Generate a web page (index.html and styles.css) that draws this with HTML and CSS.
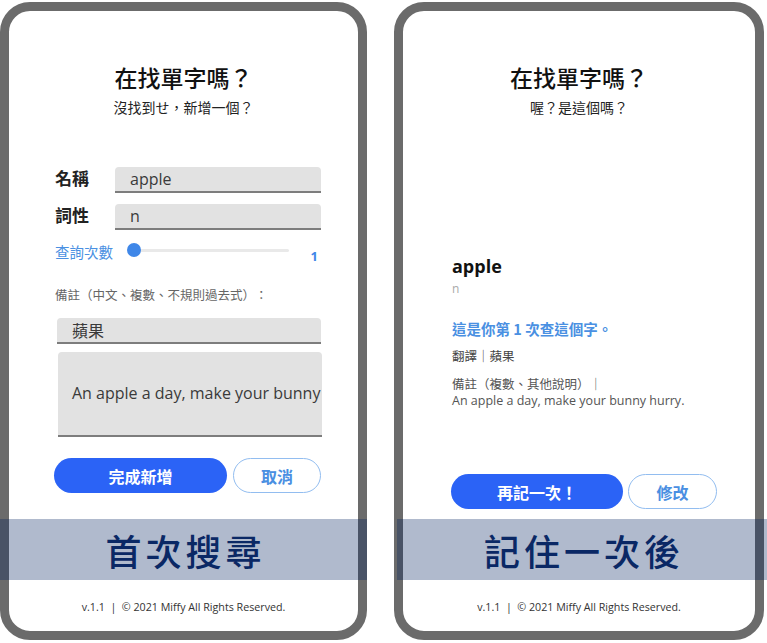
FILE: index.html
```html
<!DOCTYPE html>
<html lang="zh-Hant">
<head>
<meta charset="utf-8">
<title>單字本</title>
<link rel="stylesheet" href="styles.css">
</head>
<body>
<div class="page">
  <section class="phone phone-left">
    <header class="head">
      <h1 class="title">在找單字嗎？</h1>
      <p class="subtitle">沒找到せ，新增一個？</p>
    </header>
    <div class="form">
      <div class="row">
        <span class="label">名稱</span>
        <div class="field grow">apple</div>
      </div>
      <div class="row row-2">
        <span class="label">詞性</span>
        <div class="field grow">n</div>
      </div>
      <div class="slider-row">
        <span class="slider-label">查詢次數</span>
        <div class="track"><span class="thumb"></span></div>
        <span class="slider-value">1</span>
      </div>
      <p class="note-label">備註（中文、複數、不規則過去式）：</p>
      <div class="field field-full">蘋果</div>
      <div class="field area"><span class="area-text">An apple a day, make your bunny hurry.</span></div>
    </div>
    <div class="actions actions-left">
      <button class="btn btn-primary btn-wide">完成新增</button>
      <button class="btn btn-outline">取消</button>
    </div>
    <div class="banner banner-left">首次搜尋</div>
    <footer class="footer">v.1.1 &nbsp;|&nbsp; © 2021 Miffy All Rights Reserved.</footer>
  </section>

  <section class="phone phone-right">
    <header class="head">
      <h1 class="title">在找單字嗎？</h1>
      <p class="subtitle">喔？是這個嗎？</p>
    </header>
    <div class="word">
      <h2 class="word-name">apple</h2>
      <p class="word-pos">n</p>
      <p class="word-count">這是你第 1 次查這個字。</p>
      <p class="word-line">翻譯｜蘋果</p>
      <p class="word-line word-note">備註（複數、其他說明）｜</p>
      <p class="word-example">An apple a day, make your bunny hurry.</p>
    </div>
    <div class="actions actions-right">
      <button class="btn btn-primary btn-wide">再記一次！</button>
      <button class="btn btn-outline">修改</button>
    </div>
    <div class="banner banner-right">記住一次後</div>
    <footer class="footer">v.1.1 &nbsp;|&nbsp; © 2021 Miffy All Rights Reserved.</footer>
  </section>
</div>
</body>
</html>
```

FILE: styles.css
```css
* { box-sizing: border-box; }

html, body {
  margin: 0;
  padding: 0;
  background: #ffffff;
}

body {
  font-family: "Open Sans", "Noto Sans CJK TC", sans-serif;
  color: #222;
  width: 767px;
  height: 643px;
  overflow: hidden;
  text-spacing-trim: space-all;
  font-feature-settings: "chws" 0, "halt" 0, "palt" 0;
}

.page {
  display: flex;
  gap: 27px;
  padding-top: 2px;
}

.phone {
  position: relative;
  height: 638px;
  border: 9px solid #6b6b6b;
  border-radius: 30px;
  background: #fff;
  display: flex;
  flex-direction: column;
  padding: 52px 37px 16px 46px;
}

.phone-left { width: 367px; }
.phone-right { width: 370px; padding-left: 49px; }

.head {
  text-align: center;
  margin-left: -9px;
}
.phone-right .head { margin-left: -12px; }

.title {
  margin: 0;
  font-size: 23px;
  line-height: 28px;
  font-weight: 500;
  color: #111;
  font-family: "Noto Sans CJK TC", sans-serif;
}

.subtitle {
  margin: 6px 0 0;
  font-size: 14px;
  line-height: 20px;
  color: #222;
  font-family: "Noto Sans CJK TC", sans-serif;
}

/* ---------- form ---------- */
.form {
  margin-top: 50px;
  display: flex;
  flex-direction: column;
}

.row {
  display: flex;
  align-items: center;
  height: 26px;
}
.row-2 { margin-top: 11px; }

.label {
  width: 60px;
  font-size: 17px;
  line-height: 22px;
  margin-top: -5px;
  font-weight: 700;
  color: #222;
  font-family: "Noto Sans CJK TC", sans-serif;
}

.field {
  height: 26px;
  background: #e2e2e2;
  border-radius: 4px 4px 0 0;
  border-bottom: 2px solid #7d7d7d;
  padding-left: 15px;
  font-size: 16px;
  line-height: 25px;
  color: #3a3a3a;
  white-space: nowrap;
  overflow: hidden;
}
.grow { flex: 1; }

.field-full {
  margin-top: 14px;
  margin-left: 2px;
  font-family: "Noto Sans CJK TC", sans-serif;
  line-height: 24px;
}

.area {
  margin-top: 8px;
  margin-left: 3px;
  margin-right: -1px;
  height: 85px;
  display: flex;
  align-items: center;
  padding-left: 14px;
}

.slider-row {
  margin-top: 10px;
  height: 22px;
  display: flex;
  align-items: center;
}

.slider-label {
  font-size: 14.5px;
  color: #4a90e2;
  font-family: "Noto Sans CJK TC", sans-serif;
}

.track {
  position: relative;
  margin-left: 21px;
  width: 155px;
  height: 3px;
  background: #e9e9e9;
  border-radius: 2px;
  margin-top: -2px;
}

.thumb {
  position: absolute;
  left: -7px;
  top: -5.5px;
  width: 14px;
  height: 14px;
  border-radius: 50%;
  background: #3f87e8;
}

.slider-value {
  margin-left: auto;
  margin-right: 3px;
  padding-top: 9px;
  font-size: 13px;
  font-weight: 700;
  color: #3f87e8;
}

.note-label {
  margin: 24px 0 0;
  font-size: 12.5px;
  line-height: 18px;
  color: #666;
  font-family: "Noto Sans CJK TC", sans-serif;
}

/* ---------- buttons ---------- */
.actions {
  display: flex;
  gap: 6px;
  margin-top: 21px;
  margin-left: -1px;
}
.actions-right { margin-top: 65px; gap: 5px; }

.btn {
  height: 35px;
  border-radius: 18px;
  font-size: 16px;
  font-weight: 700;
  font-family: "Noto Sans CJK TC", sans-serif;
  cursor: pointer;
  padding: 0;
}

.btn-primary {
  background: #2b63f6;
  color: #fff;
  border: none;
}
.btn-wide { width: 173px; }
.actions-right .btn-wide { width: 172px; }

.btn-outline {
  width: 88px;
  background: #fff;
  border: 1.5px solid #92bdf0;
  color: #4a8fe2;
}
.actions-right .btn-outline { width: 89px; }

/* ---------- word card ---------- */
.word {
  margin-top: 137px;
  display: flex;
  flex-direction: column;
}

.word-name {
  margin: 0;
  font-size: 18px;
  line-height: 24px;
  font-weight: 700;
  color: #111;
}

.word-pos {
  margin: 3px 0 0;
  font-size: 12px;
  line-height: 16px;
  color: #aaa;
}

.word-count {
  margin: 22px 0 0;
  font-size: 14.5px;
  line-height: 20px;
  font-weight: 700;
  color: #4a90e2;
  font-family: "Noto Sans CJK TC", sans-serif;
}

.word-line {
  margin: 8px 0 0;
  font-size: 12.5px;
  line-height: 18px;
  color: #444;
  font-family: "Noto Sans CJK TC", sans-serif;
}
.word-note { margin-top: 10px; color: #555; }

.word-example {
  margin: 0;
  font-size: 12.5px;
  line-height: 16px;
  color: #555;
  white-space: nowrap;
}

/* ---------- banner overlay ---------- */
.banner {
  position: absolute;
  top: 508px;
  height: 61px;
  background: rgba(0, 32, 95, 0.31);
  display: flex;
  align-items: center;
  justify-content: center;
  font-family: "Noto Sans CJK TC", sans-serif;
  font-size: 36px;
  font-weight: 500;
  letter-spacing: 4px;
  color: #0a2865;
  padding-left: 4px;
}
.banner-left { left: -9px; width: 367px; }
.banner-right { left: -6px; width: 370px; }

/* ---------- footer ---------- */
.footer {
  margin-top: auto;
  margin-left: -9px;
  text-align: center;
  font-size: 10.7px;
  line-height: 16px;
  color: #333;
}
.phone-right .footer { margin-left: -12px; }
```
